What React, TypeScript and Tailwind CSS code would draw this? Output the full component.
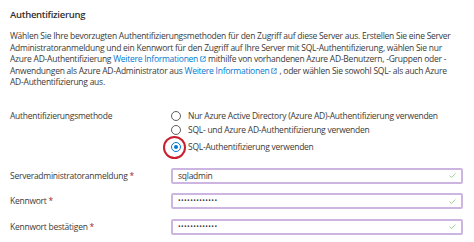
import React from "react";

// ==================== 상수 ====================
const FONT = "font-['Open_Sans','Noto_Sans',sans-serif]";
const BODY = "text-[8.5px] tracking-[-0.25px] text-[#3b3a39]";

function ExternalIcon() {
  return (
    <svg
      width="6"
      height="6"
      viewBox="0 0 8 8"
      className="inline-block ml-[2px] mb-[1px]"
      fill="none"
      stroke="#0078d4"
      strokeWidth="1"
    >
      <path d="M3.5 1H1v6h6V4.5" />
      <path d="M4.5 1H7v2.5M7 1L3.5 4.5" />
    </svg>
  );
}

function Link({ children }: { children: React.ReactNode }) {
  return (
    <span className="text-[#0078d4]">
      {children}
      <ExternalIcon />
    </span>
  );
}

function Radio({
  label,
  checked = false,
  marked = false,
}: {
  label: string;
  checked?: boolean;
  marked?: boolean;
}) {
  return (
    <div className="flex items-center h-[14px]">
      <div className="relative w-[10px] h-[10px] shrink-0">
        <div
          className={`w-[10px] h-[10px] rounded-full border flex items-center justify-center bg-white ${
            checked ? "border-[#0078d4]" : "border-[#605e5c]"
          }`}
        >
          {checked && <div className="w-[4px] h-[4px] rounded-full bg-[#0078d4]" />}
        </div>
        {marked && (
          <div className="absolute left-[-8px] top-[-6px] w-[23px] h-[23px] rounded-full border-2 border-[#c8202f]" />
        )}
      </div>
      <span className={`ml-[7px] whitespace-nowrap ${BODY}`}>{label}</span>
    </div>
  );
}

function Field({ label, value, secret = false }: { label: string; value: string; secret?: boolean }) {
  return (
    <div className="flex items-center h-[16px]">
      <div className={`w-[161px] shrink-0 whitespace-nowrap ${BODY}`}>
        {label} <span className="text-[#a4262c]">*</span>
      </div>
      <div className="flex-1 h-[16px] border-2 border-[#cdb5e2] rounded-[2px] flex items-center justify-between pl-[5px] pr-[5px]">
        <span
          className={
            secret
              ? "text-[7px] tracking-[0.4px] text-[#3b3a39] leading-[12px]"
              : `${BODY} leading-[12px]`
          }
        >
          {value}
        </span>
        <svg width="7" height="5" viewBox="0 0 8 6" fill="none" stroke="#8cc286" strokeWidth="1">
          <path d="M0.5 3.2L2.8 5.3L7.5 0.6" />
        </svg>
      </div>
    </div>
  );
}

// ==================== 메인 컴포넌트 ====================
export default function App() {
  return (
    <div className={`w-[474px] h-[242px] bg-white overflow-hidden ${FONT}`}>
      <div className="pl-[10px] pr-[11px] pt-[8px]">
        <h2 className="text-[9.5px] font-semibold tracking-[-0.3px] text-[#323130] leading-[14px]">
          Authentifizierung
        </h2>

        <p className={`mt-[8px] leading-[11.6px] whitespace-nowrap ${BODY}`}>
          Wählen Sie Ihre bevorzugten Authentifizierungsmethoden für den Zugriff auf diese Server aus. Erstellen Sie eine Server
          <br />
          Administratoranmeldung und ein Kennwort für den Zugriff auf Ihre Server mit SQL-Authentifizierung, wählen Sie nur
          <br />
          Azure AD-Authentifizierung <Link>Weitere Informationen</Link> mithilfe von vorhandenen Azure AD-Benutzern, -Gruppen oder -
          <br />
          Anwendungen als Azure AD-Administrator aus <Link>Weitere Informationen</Link> , oder wählen Sie sowohl SQL- als auch Azure
          <br />
          AD-Authentifizierung aus.
        </p>

        <div className="mt-[21px] flex">
          <div className={`w-[161px] shrink-0 leading-[14px] ${BODY}`}>Authentifizierungsmethode</div>
          <div className="flex flex-col">
            <Radio label="Nur Azure Active Directory (Azure AD)-Authentifizierung verwenden" />
            <Radio label="SQL- und Azure AD-Authentifizierung verwenden" />
            <div className="mt-[3px]">
              <Radio label="SQL-Authentifizierung verwenden" checked marked />
            </div>
          </div>
        </div>

        <div className="mt-[14px] flex flex-col gap-[9.5px]">
          <Field label="Serveradministratoranmeldung" value="sqladmin" />
          <Field label="Kennwort" value="•••••••••••••" secret />
          <Field label="Kennwort bestätigen" value="•••••••••••••" secret />
        </div>
      </div>
    </div>
  );
}
